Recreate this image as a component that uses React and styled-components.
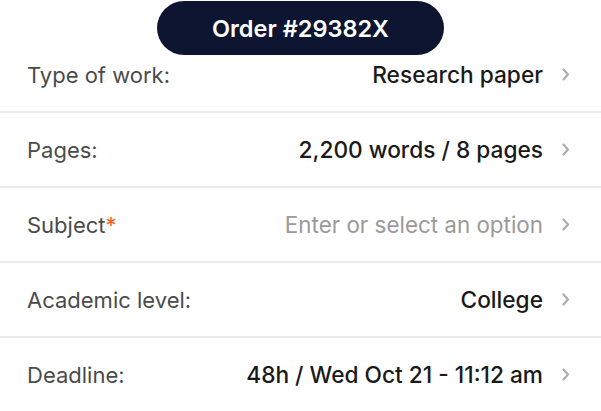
import React from "react";
import styled, { createGlobalStyle } from "styled-components";

const rows = [
  { label: "Type of work:", value: "Research paper" },
  { label: "Pages:", value: "2,200 words / 8 pages" },
  { label: "Subject", required: true, value: "Enter or select an option", placeholder: true },
  { label: "Academic level:", value: "College" },
  { label: "Deadline:", value: "48h / Wed Oct 21 - 11:12 am" },
];

const Chevron = () => (
  <svg width="8" height="13" viewBox="0 0 8 13" fill="none">
    <path d="M1.5 1.5L6 6.5L1.5 11.5" stroke="#adadad" strokeWidth="2.2" strokeLinecap="round" strokeLinejoin="round" />
  </svg>
);

export default function App() {
  return (
    <>
      <Global />
      <Page>
        <Header>
          <Pill>Order #29382X</Pill>
        </Header>
        <List>
          {rows.map((r) => (
            <Row key={r.label}>
              <Label>
                {r.label}
                {r.required && <Star>*</Star>}
              </Label>
              <Value $placeholder={r.placeholder}>{r.value}</Value>
              <Arrow>
                <Chevron />
              </Arrow>
            </Row>
          ))}
        </List>
      </Page>
    </>
  );
}

const Global = createGlobalStyle`
  body {
    margin: 0;
    background: #ffffff;
    font-family: Inter, "Noto Sans", sans-serif;
  }
`;

const Page = styled.div`
  width: 601px;
  height: 411px;
  overflow: hidden;
  background: #fff;
`;

const Header = styled.div`
  display: flex;
  justify-content: center;
  padding-top: 1px;
  margin-bottom: -17px;
  position: relative;
  z-index: 1;
`;

const Pill = styled.div`
  width: 287px;
  height: 54px;
  border-radius: 27px;
  background: #0d1530;
  color: #ffffff;
  display: flex;
  align-items: center;
  justify-content: center;
  font-size: 23.5px;
  font-weight: 600;
`;

const List = styled.div`
  display: flex;
  flex-direction: column;
`;

const Row = styled.div`
  display: flex;
  align-items: center;
  height: 73px;
  padding: 0 31px 0 27px;
  border-bottom: 2px solid #ebebeb;
  font-size: 22px;
`;

const Label = styled.div`
  color: #4b4b4b;
  flex: 1;
`;

const Star = styled.span`
  color: #fa5a1e;
`;

const Value = styled.div`
  color: ${(p) => (p.$placeholder ? "#9a9a9a" : "#1a1a1a")};
  font-size: ${(p) => (p.$placeholder ? "22.4px" : "22.7px")};
  font-weight: ${(p) => (p.$placeholder ? 400 : 500)};
`;

const Arrow = styled.div`
  display: flex;
  align-items: center;
  margin-left: 19px;
`;
